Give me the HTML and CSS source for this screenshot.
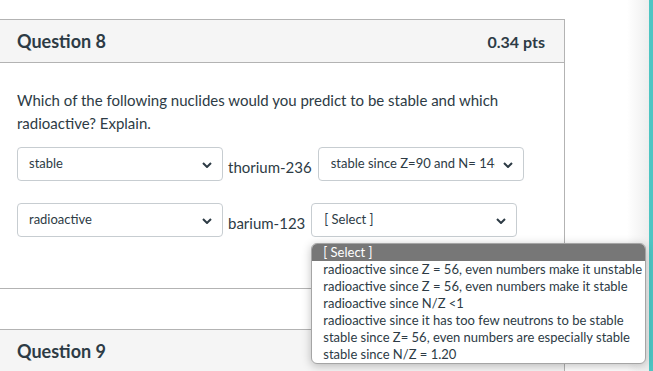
FILE: index.html
```html
<!DOCTYPE html>
<html>
<head>
<meta charset="utf-8">
<link rel="stylesheet" href="styles.css">
</head>
<body>
<div class="page">
  <div class="main">
    <div class="q-panel">
      <div class="q-header">
        <span class="q-title">Question 8</span>
        <span class="q-pts">0.34 pts</span>
      </div>
      <div class="q-body">
        <p class="q-text">Which of the following nuclides would you predict to be stable and which radioactive? Explain.</p>
        <div class="row">
          <div class="sel sel-a"><span class="sel-text">stable</span><svg class="chev" viewBox="0 0 10 6" width="10" height="6"><path d="M1 1 L5 5 L9 1" fill="none" stroke="#2d3b45" stroke-width="2"/></svg></div>
          <span class="label">thorium-236</span>
          <div class="sel sel-b"><span class="sel-text clip">stable since Z=90 and N= 146</span><svg class="chev" viewBox="0 0 10 6" width="10" height="6"><path d="M1 1 L5 5 L9 1" fill="none" stroke="#2d3b45" stroke-width="2"/></svg></div>
        </div>
        <div class="row row2">
          <div class="sel sel-a"><span class="sel-text">radioactive</span><svg class="chev" viewBox="0 0 10 6" width="10" height="6"><path d="M1 1 L5 5 L9 1" fill="none" stroke="#2d3b45" stroke-width="2"/></svg></div>
          <span class="label">barium-123</span>
          <div class="sel sel-b sel-open"><span class="sel-text">[ Select ]</span><svg class="chev" viewBox="0 0 10 6" width="10" height="6"><path d="M1 1 L5 5 L9 1" fill="none" stroke="#2d3b45" stroke-width="2"/></svg>
            <ul class="dropdown">
              <li class="dd-head">[ Select ]</li>
              <li>radioactive since Z = 56, even numbers make it unstable</li>
              <li>radioactive since Z = 56, even numbers make it stable</li>
              <li>radioactive since N/Z &lt;1</li>
              <li>radioactive since it has too few neutrons to be stable</li>
              <li>stable since Z= 56, even numbers are especially stable</li>
              <li>stable since N/Z = 1.20</li>
            </ul>
          </div>
        </div>
      </div>
    </div>
    <div class="q-panel">
      <div class="q-header">
        <span class="q-title">Question 9</span>
      </div>
    </div>
  </div>
  <div class="gutter"></div>
</div>
</body>
</html>
```
FILE: styles.css
```css
html, body {
  margin: 0;
  padding: 0;
  background: #fff;
}
body {
  font-family: Lato, "Open Sans", sans-serif;
  color: #2d3b45;
}
.page {
  display: flex;
  height: 371px;
  overflow: hidden;
}
.main {
  width: 565px;
  flex: none;
  padding-top: 19px;
  display: flex;
  flex-direction: column;
  gap: 40px;
}
.q-panel {
  border: 1px solid #b3b3b3;
  border-left: none;
}
.q-header {
  height: 42px;
  background: #f5f5f5;
  display: flex;
  align-items: center;
  justify-content: space-between;
  padding: 0 19px 0 17px;
  border-bottom: 1px solid #b3b3b3;
}
.q-title {
  font-size: 18px;
  font-weight: 700;
}
.q-pts {
  font-size: 16px;
  font-weight: 700;
}
.q-body {
  padding: 26px 17px 51px 17px;
}
.q-text {
  margin: 0;
  font-size: 15px;
  line-height: 23px;
}
.row {
  display: flex;
  align-items: center;
  margin-top: 12px;
}
.row2 {
  margin-top: 22px;
}
.sel {
  position: relative;
  box-sizing: border-box;
  height: 34px;
  border: 1px solid #c7cdd1;
  border-radius: 4px;
  background: #fff;
  display: flex;
  align-items: center;
  padding: 0 10px 0 11px;
  font-size: 13px;
  justify-content: space-between;
}
.sel-a {
  width: 206px;
}
.sel-b {
  width: 206px;
  padding-left: 12px;
}
.sel-text {
  white-space: nowrap;
  margin-top: -3px;
}
.clip {
  width: 164px;
  overflow: hidden;
}
.chev {
  flex: none;
  margin-top: 1px;
}
.label {
  font-size: 15px;
  margin: 6px 6px 0 5px;
}
.dropdown {
  position: absolute;
  left: -1px;
  top: 39px;
  width: 333px;
  margin: 0;
  padding: 0;
  list-style: none;
  background: #fff;
  border: 1px solid #a5a5a5;
  border-radius: 6px;
  box-shadow: 0 2px 10px rgba(0, 0, 0, 0.25);
  overflow: hidden;
  z-index: 5;
}
.dropdown li {
  height: 17px;
  line-height: 17px;
  font-size: 13px;
  padding-left: 11px;
  white-space: nowrap;
}
.dropdown .dd-head {
  background: #777;
  color: #fff;
}
.gutter {
  flex: 1;
  background: linear-gradient(to right, #fff 0, #fff 62px, #eeeeee 84px);
  border-right: 4px solid #4ec5c3;
}
```
